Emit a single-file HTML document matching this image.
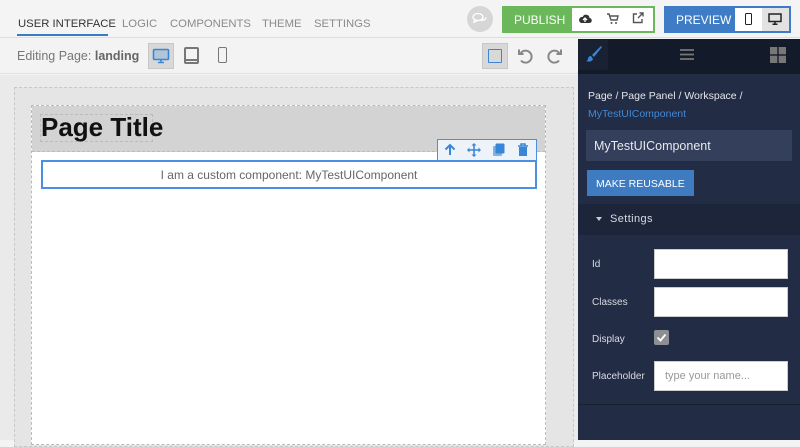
<!DOCTYPE html>
<html><head><meta charset="utf-8"><style>
*{box-sizing:border-box;margin:0;padding:0}
body{width:800px;height:440px;overflow:hidden;font-family:"Liberation Sans",sans-serif;background:#f3f3f3;position:relative}
.abs{position:absolute}
.tab{position:absolute;top:18px;font-size:11.3px;color:#8a8a8a}
.lbl{position:absolute;left:592px;font-size:10px;color:#d8dbe3}
.inp{position:absolute;left:654px;width:134px;height:30px;background:#fff;border:1px solid #ccc}
</style></head><body>
<div class="abs" style="left:0;top:0;width:800px;height:38px;background:#f4f4f4;border-bottom:1px solid #ddd"></div>
<div class="tab" style="left:18px;color:#333">USER INTERFACE</div>
<div class="abs" style="left:17px;top:34px;width:91px;height:2px;background:#3a7bc8"></div>
<div class="tab" style="left:122px">LOGIC</div>
<div class="tab" style="left:170px">COMPONENTS</div>
<div class="tab" style="left:262px">THEME</div>
<div class="tab" style="left:314px">SETTINGS</div>
<div class="abs" style="left:467px;top:6px;width:26px;height:26px;border-radius:50%;background:#d6d6d6"></div>
<svg class="abs" style="left:472px;top:11px" width="16" height="16" viewBox="0 0 16 16" fill="none" stroke="#fff" stroke-width="1.3"><ellipse cx="6" cy="6" rx="5" ry="3.5"/><path d="M9 9.5c3 0 5-1.5 5-3"/><path d="M3 9l-1 2 3-1"/></svg>
<div class="abs" style="left:502px;top:6px;width:153px;height:27px;background:#6ab85a"></div>
<div class="abs" style="left:514px;top:13px;font-size:12px;color:#fff">PUBLISH</div>
<div class="abs" style="left:572px;top:8px;width:81px;height:23px;background:#fff"></div>
<svg class="abs" style="left:578px;top:12px" width="14" height="14" viewBox="0 0 14 14"><path d="M3.5 11h7.5a2.5 2.5 0 0 0 .5-5 3.5 3.5 0 0 0-6.8-1A3 3 0 0 0 3.5 11z" fill="#333"/><path d="M7 10V6M5 8l2-2 2 2" stroke="#fff" stroke-width="1.3" fill="none"/></svg>
<svg class="abs" style="left:606px;top:12px" width="13" height="13" viewBox="0 0 13 13" fill="#555"><path d="M1 2h2l2 6h6l1-4H4" stroke="#555" stroke-width="1.4" fill="none"/><circle cx="5.5" cy="11" r="1"/><circle cx="10" cy="11" r="1"/></svg>
<svg class="abs" style="left:632px;top:12px" width="12" height="12" viewBox="0 0 12 12" fill="none" stroke="#555" stroke-width="1.4"><path d="M5 2H1.5v8.5H10V7"/><path d="M6 6l5-5M7.5 1H11v3.5"/></svg>
<div class="abs" style="left:664px;top:6px;width:127px;height:27px;background:#3e7cc6"></div>
<div class="abs" style="left:676px;top:13px;font-size:12px;color:#fff">PREVIEW</div>
<div class="abs" style="left:735px;top:8px;width:54px;height:23px;background:#fff"></div>
<div class="abs" style="left:762px;top:8px;width:27px;height:23px;background:#e2e2e2"></div>
<div class="abs" style="left:745px;top:13px;width:7px;height:12px;border:1.5px solid #222;border-radius:1.5px"></div>
<svg class="abs" style="left:768px;top:13px" width="14" height="12" viewBox="0 0 14 12" fill="none" stroke="#222" stroke-width="1.5"><rect x="1" y="1" width="12" height="7.5"/><path d="M7 9v2M4.5 11.2h5"/></svg>

<div class="abs" style="left:0;top:39px;width:578px;height:35px;background:#f3f3f3;border-bottom:1px solid #e0e0e0"></div>
<div class="abs" style="left:17px;top:49px;font-size:12.5px;color:#777">Editing Page: <b style="color:#666">landing</b></div>
<div class="abs" style="left:148px;top:43px;width:26px;height:26px;background:#d8d8d8;border:1px solid #c8c8c8"></div>
<svg class="abs" style="left:152px;top:48px" width="18" height="16" viewBox="0 0 18 16" fill="none" stroke="#3a86d6" stroke-width="1.6"><rect x="1.5" y="1.5" width="15" height="10" rx="1" fill="#3a86d6" fill-opacity=".25"/><path d="M9 12v2M6 14.5h6"/></svg>
<div class="abs" style="left:184px;top:47px;width:15px;height:17px;border:2px solid #777;border-radius:2px"></div>
<div class="abs" style="left:186px;top:59px;width:11px;height:1.5px;background:#777"></div>
<div class="abs" style="left:218px;top:47px;width:9px;height:16px;border:1.8px solid #777;border-radius:2px"></div>
<div class="abs" style="left:482px;top:43px;width:26px;height:26px;background:#d8d8d8;border:1px solid #c8c8c8"></div>
<div class="abs" style="left:488px;top:49px;width:14px;height:14px;border:1.8px solid #3a86d6;border-radius:1px"></div>
<svg class="abs" style="left:516px;top:47px" width="18" height="18" viewBox="0 0 18 18" fill="none" stroke="#888" stroke-width="2"><path d="M4.5 6.5A6 6 0 1 1 5 13.5"/><path d="M3 2.5v4.5h4.5"/></svg>
<svg class="abs" style="left:546px;top:47px" width="18" height="18" viewBox="0 0 18 18" fill="none" stroke="#888" stroke-width="2"><path d="M13.5 6.5A6 6 0 1 0 13 13.5"/><path d="M15 2.5v4.5h-4.5"/></svg>

<div class="abs" style="left:0;top:75px;width:578px;height:365px;background:#eaeaea"></div>
<div class="abs" style="left:14px;top:87px;width:560px;height:360px;background:#e5e5e5;border:1px dashed #c8c8c8"></div>
<div class="abs" style="left:31px;top:105px;width:515px;height:340px;background:#fff;border:1px dashed #bbb"></div>
<div class="abs" style="left:32px;top:106px;width:513px;height:46px;background:#d3d3d3;border-bottom:1px dashed #bbb"></div>
<div class="abs" style="left:40px;top:114px;width:113px;height:28px;border:1px dashed #bbb"></div>
<div class="abs" style="left:41px;top:112px;font-size:26px;font-weight:bold;color:#111">Page Title</div>
<div class="abs" style="left:437px;top:139px;width:100px;height:22px;background:#eef3fa;border:1px solid #4a90e2"></div>
<svg class="abs" style="left:442px;top:142px" width="90" height="16" viewBox="0 0 90 16" fill="#3a86d6" stroke="#3a86d6"><path d="M8 13V3M3.5 7.5L8 3l4.5 4.5" fill="none" stroke-width="2"/><path d="M32 2v12M26 8h12" stroke-width="1.6"/><path d="M32 1l-2.5 2.5h5zM32 15l-2.5-2.5h5zM25 8l2.5-2.5v5zM39 8l-2.5-2.5v5z" stroke="none"/><rect x="51" y="4" width="9" height="10" rx="1" stroke="none" opacity=".6"/><rect x="53.5" y="1.5" width="9" height="10" rx="1" stroke="none"/><path d="M76 4h10M79 4V2h4v2" fill="none" stroke-width="1.5"/><rect x="77" y="5" width="8" height="9" stroke="none"/></svg>
<div class="abs" style="left:41px;top:160px;width:496px;height:29px;background:#fff;border:2px solid #4a90e2"></div>
<div class="abs" style="left:41px;top:168px;width:496px;text-align:center;font-size:12px;color:#666">I am a custom component: MyTestUIComponent</div>

<div class="abs" style="left:578px;top:39px;width:222px;height:401px;background:#222c44"></div>
<div class="abs" style="left:578px;top:39px;width:222px;height:35px;background:#131a2a"></div>
<div class="abs" style="left:578px;top:40px;width:30px;height:30px;background:#1a2133"></div>
<svg class="abs" style="left:585px;top:45px" width="18" height="18" viewBox="0 0 18 18" fill="#3a86d6"><path d="M16 1L7 10l2 2 8-10z"/><path d="M6 11c-2 0-3 1.5-3 3 0 1-1 2-2 2 2 1 6 1 7-2z"/></svg>
<svg class="abs" style="left:680px;top:48px" width="14" height="13" viewBox="0 0 14 13" stroke="#777" stroke-width="1.8"><path d="M0 2h14M0 6.5h14M0 11h14"/></svg>
<svg class="abs" style="left:770px;top:47px" width="16" height="16" viewBox="0 0 16 16" fill="#777"><rect x="0" y="0" width="7.3" height="7.3"/><rect x="8.7" y="0" width="7.3" height="7.3"/><rect x="0" y="8.7" width="7.3" height="7.3"/><rect x="8.7" y="8.7" width="7.3" height="7.3"/></svg>
<div class="abs" style="left:588px;top:87px;font-size:10.5px;color:#e4e6ec;line-height:18px">Page / Page Panel / Workspace /<br><span style="color:#3f8ad8">MyTestUIComponent</span></div>
<div class="abs" style="left:586px;top:130px;width:206px;height:31px;background:#343f5c"></div>
<div class="abs" style="left:594px;top:139px;font-size:12.5px;color:#e6e8ee">MyTestUIComponent</div>
<div class="abs" style="left:587px;top:170px;width:107px;height:26px;background:#3f7bc1"></div>
<div class="abs" style="left:596px;top:178px;font-size:10.5px;color:#fff">MAKE REUSABLE</div>
<div class="abs" style="left:578px;top:204px;width:222px;height:31px;background:#1c253a"></div>
<div class="abs" style="left:596px;top:217px;width:0;height:0;border-left:3.5px solid transparent;border-right:3.5px solid transparent;border-top:4px solid #ccc"></div>
<div class="abs" style="left:610px;top:213px;font-size:11px;color:#d8dbe3;letter-spacing:.4px">Settings</div>
<div class="inp" style="top:249px"></div><div class="lbl" style="top:259px">Id</div>
<div class="inp" style="top:287px"></div><div class="lbl" style="top:297px">Classes</div>
<div class="abs" style="left:654px;top:330px;width:15px;height:15px;background:#8d8f94;border-radius:2px"></div>
<svg class="abs" style="left:655px;top:331px" width="13" height="13" viewBox="0 0 13 13" fill="none" stroke="#fff" stroke-width="1.8"><path d="M2.5 6.5l3 3 5-6"/></svg>
<div class="lbl" style="top:334px">Display</div>
<div class="inp" style="top:361px"></div><div class="lbl" style="top:371px">Placeholder</div>
<div class="abs" style="left:665px;top:370px;font-size:11px;color:#999">type your name...</div>
<div class="abs" style="left:578px;top:404px;width:222px;height:1px;background:#18202f"></div>
</body></html>
